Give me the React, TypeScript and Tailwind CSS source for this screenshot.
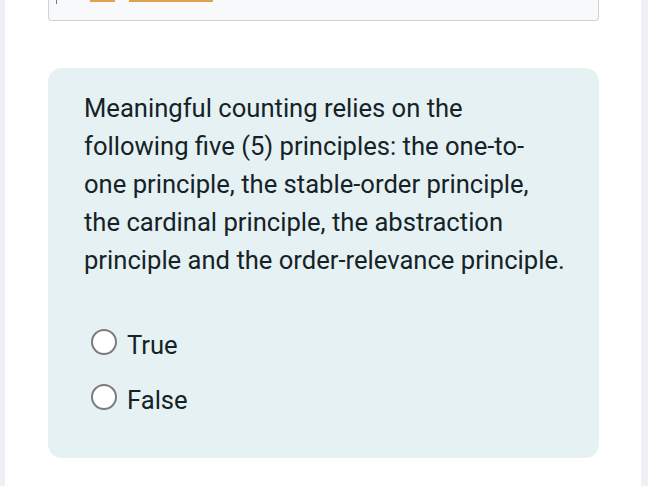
const lines = [
  'Meaningful counting relies on the',
  'following five (5) principles: the one-to-',
  'one principle, the stable-order principle,',
  'the cardinal principle, the abstraction',
  'principle and the order-relevance principle.',
];

export default function App() {
  return (
    <div className="flex h-[486px] w-[648px] overflow-hidden bg-[#eef0f5] font-['Roboto',sans-serif]">
      <div className="ml-[5px] flex h-full w-[636px] flex-col gap-[47px] bg-white pl-[43px]">
        {/* bottom edge of the previous card */}
        <div className="flex h-[21px] w-[551px] items-start rounded-b-[4px] border border-t-0 border-[#cfd3da] bg-[#f8f9fb] pl-[7px]">
          <div className="h-[4px] w-[1px] bg-[#777]" />
          <div className="ml-[33px] flex">
            <div className="h-[2px] w-[25px] bg-[#dfa052]" />
            <div className="h-[2px] w-[14px]" />
            <div className="h-[2px] w-[84px] bg-[#dfa052]" />
          </div>
        </div>

        {/* question card */}
        <div className="w-[551px] rounded-[14px] bg-[#e6f1f4] pb-[36px] pl-[36px] pr-[30px] pt-[21px]">
          <p className="text-[25.6px] leading-[38px] text-[#152327]">
            {lines.map((line) => (
              <span key={line} className="block whitespace-nowrap">
                {line}
              </span>
            ))}
          </p>
          <div className="mt-[44px] flex flex-col gap-[11px]">
            {['True', 'False'].map((label) => (
              <label key={label} className="flex h-[44px] items-center gap-[10px] pl-[7px]">
                <span className="mb-[6px] h-[26px] w-[26px] rounded-full border-2 border-[#7c7c7c] bg-white" />
                <span className="text-[25.6px] text-[#152327]">{label}</span>
              </label>
            ))}
          </div>
        </div>
      </div>
    </div>
  );
}
